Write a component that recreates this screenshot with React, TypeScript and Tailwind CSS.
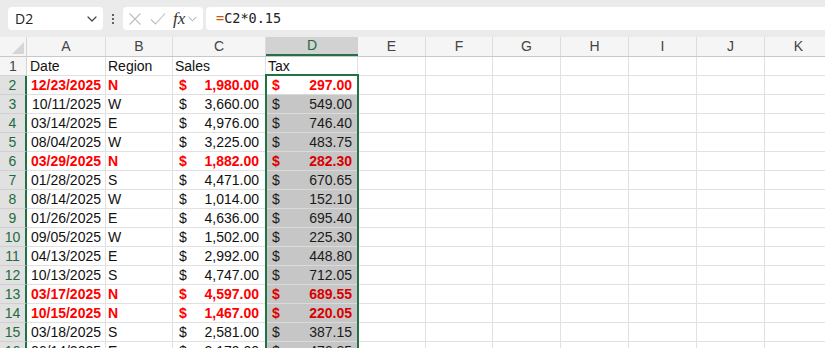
import React from "react";

type Row = { d: string; r: string; s: string; t: string; red?: boolean };

const rows: Row[] = [
  { d: "12/23/2025", r: "N", s: "1,980.00", t: "297.00", red: true },
  { d: "10/11/2025", r: "W", s: "3,660.00", t: "549.00" },
  { d: "03/14/2025", r: "E", s: "4,976.00", t: "746.40" },
  { d: "08/04/2025", r: "W", s: "3,225.00", t: "483.75" },
  { d: "03/29/2025", r: "N", s: "1,882.00", t: "282.30", red: true },
  { d: "01/28/2025", r: "S", s: "4,471.00", t: "670.65" },
  { d: "08/14/2025", r: "W", s: "1,014.00", t: "152.10" },
  { d: "01/26/2025", r: "E", s: "4,636.00", t: "695.40" },
  { d: "09/05/2025", r: "W", s: "1,502.00", t: "225.30" },
  { d: "04/13/2025", r: "E", s: "2,992.00", t: "448.80" },
  { d: "10/13/2025", r: "S", s: "4,747.00", t: "712.05" },
  { d: "03/17/2025", r: "N", s: "4,597.00", t: "689.55", red: true },
  { d: "10/15/2025", r: "N", s: "1,467.00", t: "220.05", red: true },
  { d: "03/18/2025", r: "S", s: "2,581.00", t: "387.15" },
  { d: "06/14/2025", r: "E", s: "3,179.00", t: "476.85" },
];

const emptyCols = ["E", "F", "G", "H", "I", "J", "K"];
const emptyW = ["w-[68px]", "w-[67px]", "w-[68px]", "w-[68px]", "w-[68px]", "w-[68px]", "w-[68px]"];

function Chevron() {
  return (
    <svg width="10" height="6" viewBox="0 0 10 6" fill="none">
      <path d="M1 1l4 4 4-4" stroke="#444" strokeWidth="1.2" strokeLinecap="round" strokeLinejoin="round" />
    </svg>
  );
}

export default function App() {
  return (
    <div className="w-[825px] h-[348px] overflow-hidden bg-white font-['Liberation_Sans',Arial,sans-serif] text-[14px] text-[#111]">
      {/* formula bar */}
      <div className="h-[37px] bg-[#ebebeb] flex items-start pt-[7px] pl-[8px]">
        <div className="w-[95px] h-[23px] shrink-0 bg-white rounded-[4px] flex items-center justify-between pl-[7px] pr-[6px] font-['Open_Sans',sans-serif] text-[14px] text-[#222]">
          <span>D2</span>
          <Chevron />
        </div>
        <div className="w-[20px] h-[23px] shrink-0 flex flex-col items-center justify-center gap-[2px]">
          <span className="w-[2px] h-[2px] bg-[#333] rounded-full" />
          <span className="w-[2px] h-[2px] bg-[#333] rounded-full" />
          <span className="w-[2px] h-[2px] bg-[#333] rounded-full" />
        </div>
        <div className="w-[80px] h-[23px] shrink-0 bg-white rounded-[4px] flex items-center pl-[5px]">
          <svg width="14" height="14" viewBox="0 0 14 14">
            <path d="M1.5 1.5l11 11M12.5 1.5l-11 11" stroke="#bdbdbd" strokeWidth="1.1" />
          </svg>
          <svg width="16" height="14" viewBox="0 0 16 14" className="ml-[8px]">
            <path d="M1 7.5l4.5 4.5L15 1.5" stroke="#bdbdbd" strokeWidth="1.1" fill="none" />
          </svg>
          <span className="ml-[7px] font-['Liberation_Serif',serif] italic text-[17px] text-[#333] leading-none">fx</span>
          <span className="ml-[3px] flex items-center">
            <svg width="9" height="6" viewBox="0 0 10 6" fill="none">
              <path d="M1 1l4 4 4-4" stroke="#999" strokeWidth="1.1" strokeLinecap="round" strokeLinejoin="round" />
            </svg>
          </span>
        </div>
        <div className="flex-1 h-[23px] bg-white rounded-l-[4px] ml-[3px] flex items-center pl-[10px] font-['DejaVu_Sans_Mono',monospace] text-[13.5px] text-[#222]">
          <span className="text-[#c55a11]">=</span>C2*0.15
        </div>
      </div>

      {/* grid */}
      <div className="relative">
        {/* column headers */}
        <div className="flex h-[19px] bg-[#f5f5f5] text-[#444] border-b border-[#c8c8c8] box-content">
          <div className="w-[27px] h-[19px] shrink-0 border-r border-[#d4d4d4] relative">
            <svg width="12" height="12" viewBox="0 0 12 12" className="absolute right-[2px] bottom-[2px]">
              <path d="M12 0L12 12L0 12Z" fill="#d6d6d6" />
            </svg>
          </div>
          <div className="w-[79px] shrink-0 flex items-center justify-center border-r border-[#dcdcdc]">A</div>
          <div className="w-[67px] shrink-0 flex items-center justify-center border-r border-[#dcdcdc]">B</div>
          <div className="w-[93px] shrink-0 flex items-center justify-center border-r border-[#dcdcdc]">C</div>
          <div className="w-[92px] shrink-0 flex items-center justify-center bg-[#d2d2d2] text-[#1e6b3c] border-b-2 border-[#217346]">D</div>
          {emptyCols.map((c, i) => (
            <div key={c} className={`${emptyW[i]} shrink-0 flex items-center justify-center border-r border-[#dcdcdc]`}>
              {c}
            </div>
          ))}
        </div>

        {/* row 1 */}
        <div className="flex h-[19px]">
          <div className="w-[27px] shrink-0 bg-[#f5f5f5] text-[#444] flex items-center justify-center border-r border-b border-[#d4d4d4]">1</div>
          <div className="w-[79px] shrink-0 pl-[3px] flex items-center border-r border-b border-[#e1e1e1]">Date</div>
          <div className="w-[67px] shrink-0 pl-[2px] flex items-center border-r border-b border-[#e1e1e1]">Region</div>
          <div className="w-[93px] shrink-0 pl-[2px] flex items-center border-r border-b border-[#e1e1e1]">Sales</div>
          <div className="w-[92px] shrink-0 pl-[2px] flex items-center border-r border-b border-[#e1e1e1]">Tax</div>
          {emptyW.map((w, i) => (
            <div key={i} className={`${w} shrink-0 border-r border-b border-[#e1e1e1]`} />
          ))}
        </div>

        {rows.map((row, idx) => {
          const n = idx + 2;
          const red = row.red;
          const txt = red ? "text-[#ff0000] font-bold" : "";
          const active = n === 2;
          const dBg = active ? "bg-white" : "bg-[#c6c6c6]";
          const dTxt = red ? (active ? "text-[#ff0000] font-bold" : "text-[#d90000] font-bold") : "text-[#1a1a1a]";
          return (
            <div key={n} className="flex h-[19px]">
              <div className="w-[27px] shrink-0 bg-[#e1e1e1] text-[#1e6b3c] flex items-center justify-center border-r-2 border-r-[#217346] border-b border-b-[#d0d0d0]">
                {n}
              </div>
              <div className={`w-[79px] shrink-0 pr-[4px] flex items-center justify-end border-r border-b border-[#e1e1e1] ${txt}`}>{row.d}</div>
              <div className={`w-[67px] shrink-0 pl-[2px] flex items-center border-r border-b border-[#e1e1e1] ${txt}`}>{row.r}</div>
              <div className={`w-[93px] shrink-0 pl-[6px] pr-[6px] flex items-center justify-between border-r border-b border-[#e1e1e1] ${txt}`}>
                <span>$</span>
                <span>{row.s}</span>
              </div>
              <div className={`w-[92px] shrink-0 pl-[6px] pr-[5px] flex items-center justify-between border-r border-b border-[#dadada] ${dBg} ${dTxt}`}>
                <span>$</span>
                <span>{row.t}</span>
              </div>
              {emptyW.map((w, i) => (
                <div key={i} className={`${w} shrink-0 border-r border-b border-[#e1e1e1]`} />
              ))}
            </div>
          );
        })}

        {/* selection border */}
        <div className="absolute left-[265px] top-[37px] w-[94px] h-[300px] border-2 border-[#217346] pointer-events-none" />
      </div>
    </div>
  );
}
